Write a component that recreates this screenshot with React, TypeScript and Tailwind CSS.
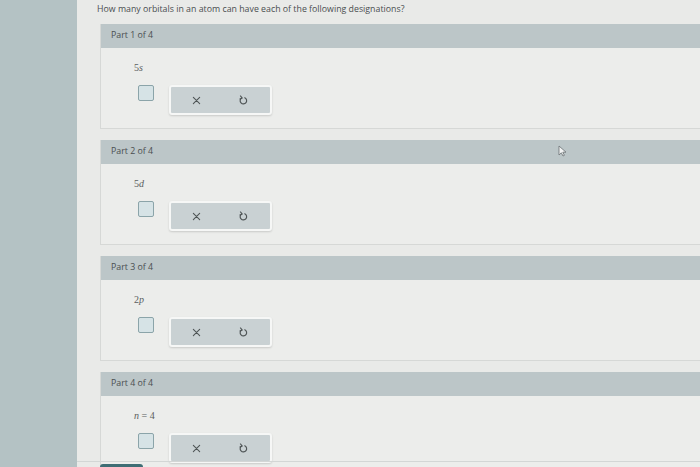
import React from "react";

const parts = [
  { n: 1, label: <span><span className="not-italic">5</span><span className="italic">s</span></span> },
  { n: 2, label: <span><span className="not-italic">5</span><span className="italic">d</span></span> },
  { n: 3, label: <span><span className="not-italic">2</span><span className="italic">p</span></span> },
  { n: 4, label: <span><span className="italic">n</span><span className="not-italic"> = 4</span></span> },
];

function XIcon() {
  return (
    <svg width="9" height="9" viewBox="0 0 10 10">
      <path d="M1.5 1.5 L8.5 8.5 M8.5 1.5 L1.5 8.5" stroke="#4f5556" strokeWidth="1.2" strokeLinecap="round" />
    </svg>
  );
}

function UndoIcon() {
  return (
    <svg width="9" height="10" viewBox="0 0 10 11">
      <path d="M3 3.2 A3.6 3.6 0 1 0 6.4 3" fill="none" stroke="#4f5556" strokeWidth="1.3" strokeLinecap="round" />
      <path d="M1.6 1 L3.6 3.4 L1 4.4" fill="none" stroke="#4f5556" strokeWidth="1.2" strokeLinejoin="round" strokeLinecap="round" />
    </svg>
  );
}

function Part({ n, label, last }: { n: number; label: React.ReactNode; last?: boolean }) {
  return (
    <div className={`border-l border-[#d6d8d6] ${last ? "" : "mb-[11px] border-b"}`}>
      <div className="flex h-[24px] items-center bg-[#bcc6c8] pl-[10px] text-[8.8px] text-[#4a4e50]">
        Part {n} of 4
      </div>
      <div className="h-[80px] bg-[#ecedeb] pl-[33px]">
        <div
          className="pt-[14px] text-[10px] leading-[12px] text-[#5a5e60]"
          style={{ fontFamily: '"Liberation Serif", "DejaVu Serif", serif' }}
        >
          {label}
        </div>
        <div className="mt-[11px] flex items-start">
          <div className="ml-[4px] h-[16px] w-[16px] rounded-[2px] border-[1.5px] border-[#8ba4a9] bg-[#d6e3e6]" />
          <div className="ml-[15px] flex h-[30px] w-[103px] items-center rounded-[3px] border-2 border-[#f6f7f6] bg-[#c9d1d3] shadow-[0_1px_2px_rgba(0,0,0,0.15)]">
            <div className="flex w-1/2 justify-center pl-[2px]">
              <XIcon />
            </div>
            <div className="flex w-1/2 justify-center pr-[4px]">
              <UndoIcon />
            </div>
          </div>
        </div>
      </div>
    </div>
  );
}

export default function App() {
  return (
    <div
      className="relative flex h-[467px] w-[700px] overflow-hidden bg-[#e9eae8]"
      style={{ fontFamily: '"Open Sans", "Noto Sans", sans-serif' }}
    >
      <div className="h-full w-[77px] shrink-0 bg-[#b4c2c4]" />
      <div className="flex-1">
        <div className="h-[24px] pl-[20px] pt-[3px] text-[8.8px] leading-[12px] text-[#4a4e50]">
          How many orbitals in an atom can have each of the following designations?
        </div>
        <div className="ml-[23px]">
          {parts.map((p, i) => (
            <Part key={p.n} n={p.n} label={p.label} last={i === parts.length - 1} />
          ))}
        </div>
      </div>
      <div className="absolute bottom-[5px] left-[77px] right-0 h-px bg-[#d3d6d5]" />
      <div className="absolute bottom-[-4px] left-[100px] h-[7px] w-[43px] rounded-t-[3px] bg-[#3e6d74]" />
      <svg className="absolute left-[558px] top-[145px]" width="9" height="12" viewBox="0 0 9 12">
        <path d="M1 1 L1 10 L3.3 7.8 L5 11 L6.4 10.3 L4.8 7.2 L8 7.2 Z" fill="#f3f4f4" stroke="#6a7072" strokeWidth="0.8" strokeLinejoin="round" />
      </svg>
    </div>
  );
}
